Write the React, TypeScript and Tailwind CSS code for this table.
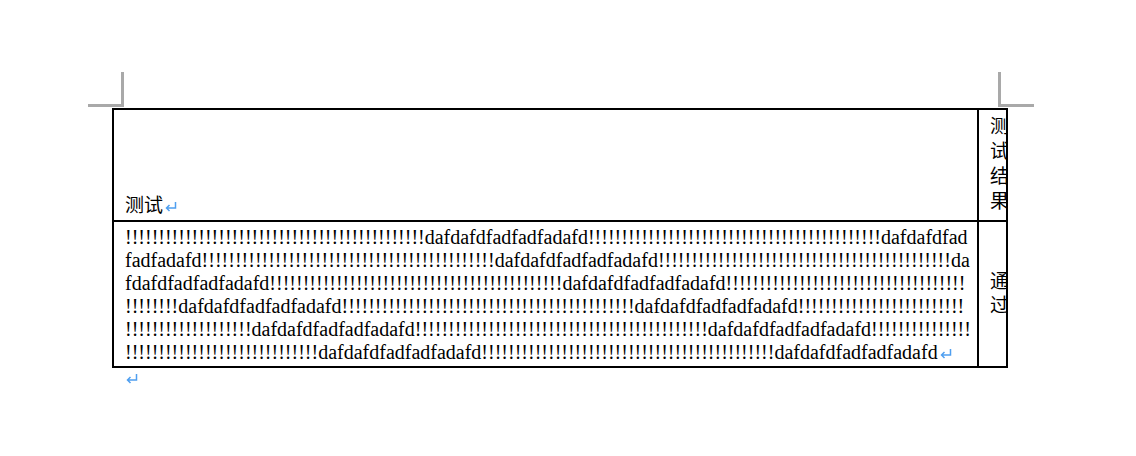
const W = "dafdafdfadfadfadafd";
const ex = (n: number) => "!".repeat(n);

const lines = [
	ex(45) + W + ex(44) + "dafdafdfad",
	"fadfadafd" + ex(44) + W + ex(44) + "da",
	"fdafdfadfadfadafd" + ex(44) + W + ex(36),
	ex(8) + W + ex(44) + W + ex(25),
	ex(19) + W + ex(44) + W + ex(15),
	ex(29) + W + ex(44) + W,
];

const ReturnMark = () => (
	<svg width="13" height="11" viewBox="0 0 13 11" className="inline-block ml-[1px] mb-[2px]">
		<path d="M11.5 1v6H2.5M5.5 4l-3 3 3 3" stroke="#4f9ff0" strokeWidth="1.5" fill="none" />
	</svg>
);

export default function App() {
	return (
		<div className="min-h-[456px] w-[1136px] bg-white pt-[72px] text-black text-[20px] font-['Liberation_Serif','Noto_Sans_CJK_SC',serif]">
			<div className="flex pl-[88px]">
				<div className="w-[36px] h-[35px] border-r-[3px] border-b-[3px] border-[#a9a9a9]"></div>
				<div className="ml-[874px] w-[36px] h-[35px] border-l-[3px] border-b-[3px] border-[#a9a9a9]"></div>
			</div>

			<div className="mt-[1px] ml-[112px] w-[896px] border-2 border-black">
				<div className="flex h-[110px]">
					<div className="w-[863px] flex items-end pl-[11px] pb-[2px] leading-[25px]">
						<span className="text-[19px]">测试<ReturnMark /></span>
					</div>
					<div className="w-[29px] border-l-2 border-black pl-[11px] pt-[4px] overflow-hidden leading-[25px] text-[19px] flex flex-col">
						<div>测</div>
						<div>试</div>
						<div>结</div>
						<div>果</div>
					</div>
				</div>
				<div className="flex h-[146px] border-t-2 border-black">
					<div className="w-[863px] pl-[11px] pt-[4px] leading-[23px] whitespace-nowrap">
						{lines.map((l, i) => (
							<div key={i}>
								{l}
								{i === lines.length - 1 && <ReturnMark />}
							</div>
						))}
					</div>
					<div className="w-[29px] border-l-2 border-black pl-[11px] overflow-hidden leading-[24px] text-[19px] flex flex-col justify-center">
						<div>通</div>
						<div>过</div>
					</div>
				</div>
			</div>

			<div className="ml-[124px] h-[22px] flex items-center">
				<ReturnMark />
			</div>
		</div>
	)
}
